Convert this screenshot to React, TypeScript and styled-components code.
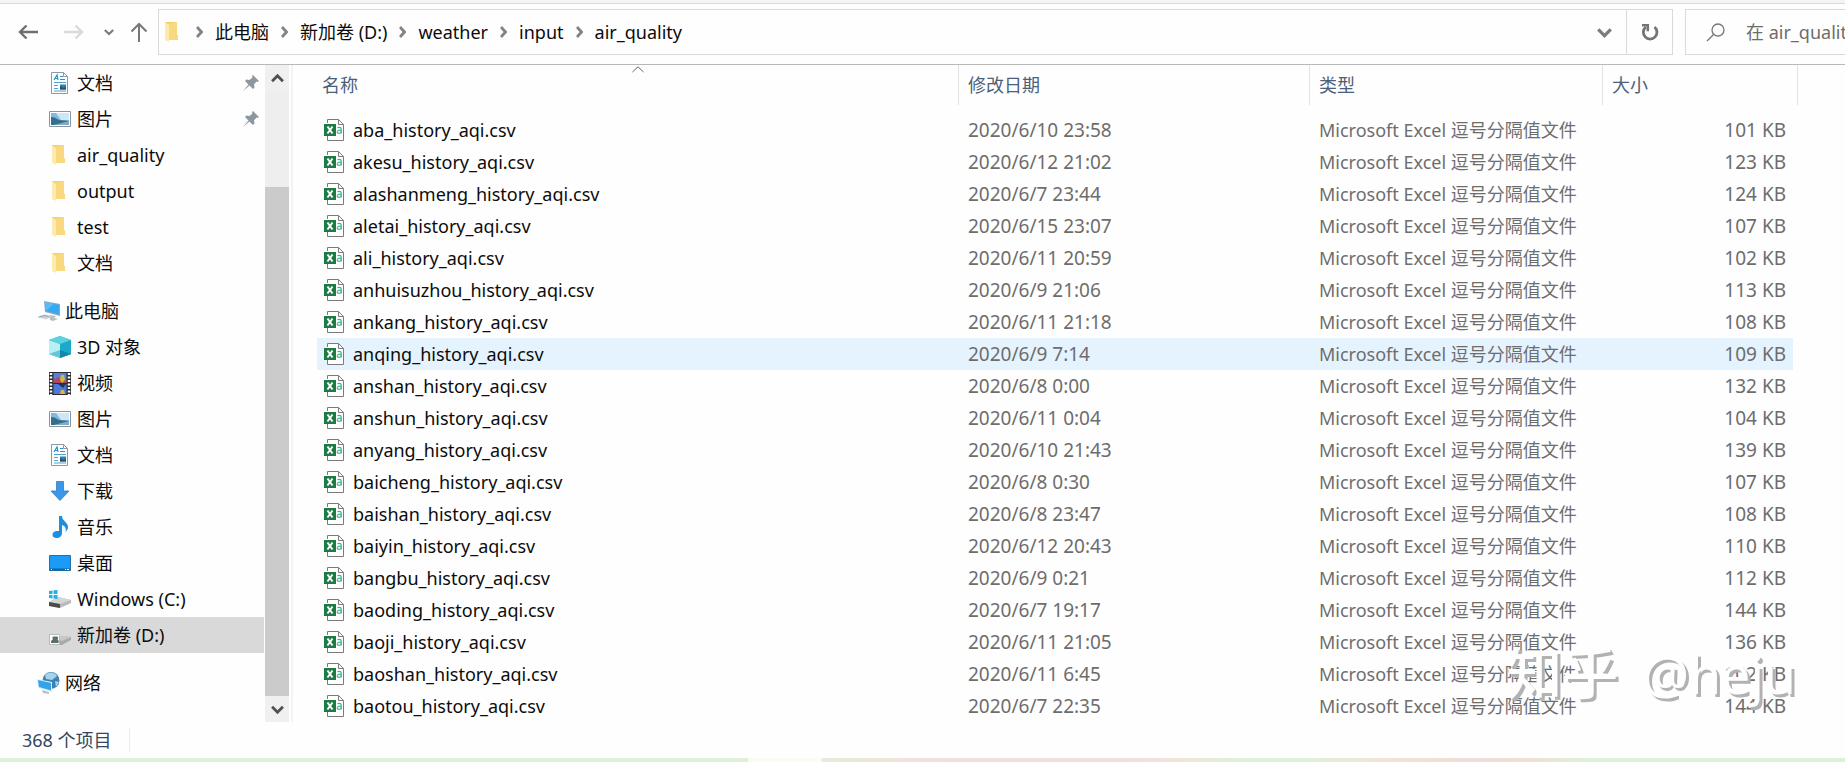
import React from "react";
import styled, { createGlobalStyle, css } from "styled-components";

const GlobalStyle = createGlobalStyle`
  *, *::before, *::after { box-sizing: border-box; }
  body {
    margin: 0;
    background: #fefefe;
    color: #0c0c0c;
    font-family: "Noto Sans", "Noto Sans CJK SC", sans-serif;
    font-size: 18px;
    line-height: 24px;
    overflow-x: hidden;
  }
  button, input { font: inherit; color: inherit; }
`;

/* ---------- layout ---------- */

const Window = styled.div`
  position: relative;
  display: flex;
  flex-direction: column;
  min-width: 1100px;
  overflow: hidden;
`;

const TopEdge = styled.div`
  height: 4px;
  background: #f4f4f4;
  border-bottom: 1px solid #dadada;
`;

const Toolbar = styled.header`
  display: flex;
  align-items: stretch;
  padding: 5px 0 9px 5px;
  border-bottom: 1px solid #b8b8b8;
`;

const IconButton = styled.button<{ $width: number }>`
  flex: none;
  width: ${(p) => p.$width}px;
  padding: 0;
  border: 0;
  background: none;
  display: flex;
  align-items: center;
  justify-content: center;
`;

const AddressBar = styled.nav`
  flex: 1;
  display: flex;
  height: 46px;
  border: 1px solid #d9d9d9;
  padding-left: 3px;
`;

const Crumbs = styled.ol`
  flex: 1;
  display: flex;
  align-items: center;
  gap: 12px;
  margin: 0;
  padding: 0;
  list-style: none;
`;

const Crumb = styled.li`
  display: flex;
  align-items: center;
  gap: 12px;
`;

const CrumbLink = styled.a`
  color: inherit;
  text-decoration: none;
  white-space: nowrap;
`;

const Refresh = styled(IconButton)`
  border-left: 1px solid #d9d9d9;
`;

const SearchBox = styled.label`
  display: flex;
  align-items: center;
  width: 160px;
  margin-left: 12px;
  padding-left: 20px;
  gap: 21px;
  border: 1px solid #d9d9d9;
  border-right: 0;
  color: #6d6d6d;
`;

const SearchInput = styled.input`
  flex: 1;
  min-width: 0;
  padding: 0;
  border: 0;
  outline: 0;
  background: none;
  &::placeholder { color: #6d6d6d; opacity: 1; }
`;

const Body = styled.div`
  display: flex;
`;

const Sidebar = styled.nav`
  flex: none;
  width: 265px;
  padding-right: 1px;
`;

const Group = styled.ul`
  margin: 0 0 12px;
  padding: 0;
  list-style: none;
`;

const PlaceLink = styled.a<{ $root?: boolean; $selected?: boolean }>`
  display: flex;
  align-items: center;
  height: 36px;
  padding: 0 5px 0 ${(p) => (p.$root ? 37 : 49)}px;
  gap: ${(p) => (p.$root ? 5 : 6)}px;
  color: inherit;
  text-decoration: none;
  background: ${(p) => (p.$selected ? "#d9d9d9" : "none")};
`;

const PlaceName = styled.span`
  flex: 1;
  white-space: nowrap;
`;

const ScrollBar = styled.div`
  flex: none;
  display: flex;
  flex-direction: column;
  width: 24px;
  background: #eeeeee;
`;

const ScrollButton = styled.button`
  height: 26px;
  padding: 0;
  border: 0;
  background: #f0f0f0;
  display: flex;
  align-items: center;
  justify-content: center;
`;

const Track = styled.div`
  flex: 1;
  display: flex;
  padding-top: 96px;
`;

const Thumb = styled.div`
  flex: 1;
  background: #cbcbcb;
`;

const Content = styled.main`
  flex: 1;
  min-width: 0;
  margin-left: 2px;
  padding: 0 47px 0 24px;
  border-left: 2px solid #f3f3f3;
`;

/* ---------- file table ---------- */

const FileTable = styled.table`
  width: 100%;
  table-layout: fixed;
  border-collapse: separate;
  border-spacing: 0;
`;

const Col = styled.col<{ $width?: number }>`
  ${(p) => p.$width && css`width: ${p.$width}px;`}
`;

const HeadCell = styled.th`
  height: 49px;
  padding: 0;
  vertical-align: top;
  font-weight: 400;
`;

const HeadButton = styled.button<{ $first?: boolean; $open?: boolean }>`
  position: relative;
  display: block;
  width: 100%;
  height: 40px;
  padding: 0 0 0 ${(p) => (p.$first ? 5 : 9)}px;
  border: 0;
  border-right: ${(p) => (p.$open ? 0 : 1)}px solid #e2e2e2;
  background: none;
  color: #4c607a;
  text-align: left;
`;

const SortMark = styled.svg`
  position: absolute;
  top: 1px;
  left: 50%;
  transform: translateX(-50%);
`;

const HeadEnd = styled.div`
  height: 40px;
  border-right: 1px solid #e2e2e2;
`;

const Row = styled.tr<{ $hover?: boolean }>`
  td:not(:last-child) { background: ${(p) => (p.$hover ? "#e5f3ff" : "none")}; }
`;

const Cell = styled.td`
  height: 32px;
  padding: 0 0 0 9px;
  color: #6d6d6d;
  white-space: nowrap;
`;

const NumberCell = styled(Cell)<{ $right?: boolean }>`
  padding-right: 7px;
  font-size: 19px;
  text-align: ${(p) => (p.$right ? "right" : "left")};
`;

const NameCell = styled(Cell)`
  padding-left: 7px;
  color: #0c0c0c;
`;

const FileName = styled.span`
  display: flex;
  align-items: center;
  gap: 9px;
`;

const StatusBar = styled.footer`
  display: flex;
  align-items: center;
  height: 36px;
  padding-left: 22px;
  color: #33475f;
`;

const StatusText = styled.span`
  padding-right: 17px;
  border-right: 1px solid #ececec;
`;

const BottomEdge = styled.div`
  height: 4px;
  background: linear-gradient(
    90deg,
    #dff0d8 40.5%, #fafbf5 40.6%, #fafbf5 44.5%, #e2ecd8 44.6%, #f0e4d8 48%,
    #f1dfe0 51%, #f1dfe0 61%, #efe5d6 64%, #dff0d8 67%, #dff0d8 71%,
    #f0e4d6 75%, #f1dcd8 80%, #efe0d4 83%, #dff0d8 86%
  );
`;

const Watermark = styled.div`
  position: absolute;
  right: 49px;
  bottom: 52px;
  display: flex;
  align-items: baseline;
  gap: 24px;
  color: #fefefe;
  font-size: 56px;
  font-weight: 500;
  line-height: 72px;
  white-space: nowrap;
  pointer-events: none;
  text-shadow: 3px 3px 0 #b2b2b2;
`;

const WatermarkUser = styled.span`
  font-size: 52px;
  font-weight: 400;
`;

/* ---------- icons ---------- */

const Arrow = ({ color, flip }: { color: string; flip?: boolean }) => (
  <svg width="20" height="16" viewBox="0 0 20 16" fill="none" stroke={color} strokeWidth="2.4">
    {flip ? <path d="M0 8h18M11.5 1.5 18 8l-6.5 6.5" /> : <path d="M20 8H2M8.500 1.500 2 8l6.500 6.500" />}
  </svg>
);

const UpArrow = () => (
  <svg width="18" height="20" viewBox="0 0 18 20" fill="none" stroke="#777" strokeWidth="2">
    <path d="M9 20V2M1.500 9.500 9 2l7.500 7.500" />
  </svg>
);

type ChevronProps = { dir: "down" | "up"; size: number; color?: string };
const chevronPaths = { down: "M1 3.500 6 8.500l5-5", up: "M1 8.500 6 3.500l5 5" };
const Chevron = ({ dir, size, color = "#7c7c7c" }: ChevronProps) => (
  <svg width={size} height={size} viewBox="0 0 12 12" fill="none" stroke={color} strokeWidth="2.6">
    <path d={chevronPaths[dir]} />
  </svg>
);

const CrumbChevron = () => (
  <svg width="7" height="12" viewBox="0 0 7 12" fill="none" stroke="#828282" strokeWidth="2.800">
    <path d="M1 1l4.500 5L1 11" />
  </svg>
);

const RefreshIcon = () => (
  <svg width="18" height="18" viewBox="0 0 18 18" fill="none" stroke="#747474" strokeWidth="2.800">
    <path d="M13.500 4A6.800 6.800 0 1 1 4.800 4" />
    <path d="M1 2.200h5.800v6" strokeWidth="2.500" />
  </svg>
);

const SearchIcon = () => (
  <svg width="19" height="19" viewBox="0 0 19 19" fill="none" stroke="#777" strokeWidth="1.300">
    <circle cx="12" cy="7" r="6" />
    <path d="M7.800 11.200 1 18" />
  </svg>
);

const FolderIcon = () => (
  <svg width="22" height="22" viewBox="0 0 22 22">
    <path d="M3 1h12v18H3z" fill="#f3d06b" />
    <path d="M6.500 2.500 15 1v13h1v5H7z" fill="#f9d97f" />
    <path d="M3 1l4 3v17l-4-2z" fill="#fdeaae" />
  </svg>
);

const DocIcon = () => (
  <svg width="22" height="22" viewBox="0 0 22 22" fill="none">
    <path d="M2.500.5h12l4 4v17h-16z" fill="#fbfdfe" stroke="#8b9aa4" />
    <path d="M14.500.5v4h4" stroke="#8b9aa4" />
    <path d="M5 8l3-5 1 5M6 6.500h3M11 4.500h3M11 7.500h5" stroke="#2f93c6" strokeWidth="1.200" />
    <path d="M5 10.500h12M5 13.500h4M5 16.500h4M5 19h12" stroke="#55a2cc" />
    <path d="M11 12.500h6v5h-6z" fill="#2f7fae" />
    <path d="M11 14l3 2 3-1v2.500h-6z" fill="#2d4f63" />
  </svg>
);

const PictureIcon = () => (
  <svg width="22" height="22" viewBox="0 0 22 22">
    <path d="M.5 3.500h21v15H.5z" fill="#fff" stroke="#8796a2" />
    <path d="M2 5h18v12H2z" fill="#7fb9e6" />
    <path d="M7 5h13v7H12z" fill="#cfe6f5" />
    <path d="M2 9c3 0 5 1 8 3l10 1v4H2z" fill="#35708a" />
    <path d="M5 17l15-4v4z" fill="#86acc4" />
  </svg>
);

const ComputerIcon = () => (
  <svg width="23" height="22" viewBox="0 0 23 22">
    <path d="M7 1l16 3v12L8 12z" fill="#8fa9ba" />
    <path d="M8 2l14 3v9.500L9 11z" fill="#35a8f2" />
    <path d="M8 2l9 2-8 6.500z" fill="#5bbcf8" />
    <path d="M12 15l7 1-2 2 4 1-5 2-3-1z" fill="#b6bfc5" />
    <path d="M0 17l7-2.500 8 2-6 3z" fill="#ccd3d8" />
    <path d="M2 17l6-1.500 4 1" stroke="#92a1ab" fill="none" />
  </svg>
);

const CubeIcon = () => (
  <svg width="22" height="22" viewBox="0 0 22 22">
    <path d="M11 0l11 4v14l-11 4-11-4V4z" fill="#23b4cf" />
    <path d="M0 4l11 4v14L0 18z" fill="#b6f0f5" />
    <path d="M11 8l11-4v14l-11 4z" fill="#1da9c9" />
    <path d="M11 0l11 4-11 4L0 4z" fill="#5dd2de" />
    <path d="M0 18l11-4v8z" fill="#62c8d8" />
    <path d="M11 14l11 4-11 4z" fill="#1588a7" />
  </svg>
);

const VideoIcon = () => (
  <svg width="22" height="23" viewBox="0 0 22 23">
    <path d="M0 0h22v23H0z" fill="#2c2c30" />
    <path d="M2 1v22M20 1v22" stroke="#fff" strokeWidth="2.500" strokeDasharray="2 1.500" />
    <path d="M4.500 1h13v10h-13z" fill="#5c7fd6" />
    <path d="M4.500 12h13v10h-13z" fill="#4c78dc" />
    <path d="M4.500 8l5-3 3 4 5-1v3h-13z" fill="#b3485a" />
    <path d="M12 3h3l1 5-3 3-2-3z" fill="#d8b92c" />
    <path d="M12 18h3l1 4h-5z" fill="#e3b62a" />
    <path d="M9 12h8l-3 4z" fill="#24324f" />
  </svg>
);

const DownloadIcon = () => (
  <svg width="22" height="22" viewBox="0 0 22 22">
    <path d="M7.500 1.500h7V11H20l-9 9.500L2 11h5.500z" fill="#3b97e8" stroke="#2b7fc9" strokeWidth=".8" />
  </svg>
);

const MusicIcon = () => (
  <svg width="22" height="22" viewBox="0 0 22 22" fill="#1d8fe0">
    <path d="M10 0h3c0 5 6 6 6 11 0 2-1 3.500-2.500 5 1-4-.5-6-3.500-7v8c0 3-2.500 5-5.500 5S3.500 20.500 3.500 18.500 6 15 8 15h2z" />
  </svg>
);

const DesktopIcon = () => (
  <svg width="22" height="22" viewBox="0 0 22 22">
    <path d="M.5 3.500h21v15H.5z" fill="#1c9af7" stroke="#2b6f9f" />
    <path d="M1 16.500h20v2H1z" fill="#0d66ad" />
    <path d="M2 17.500h1M16 17.500h1M18 17.500h2" stroke="#fff" />
  </svg>
);

const WinDriveIcon = () => (
  <svg width="22" height="22" viewBox="0 0 22 22">
    <path d="M0 14l9-5 13 3v3l-11 5-11-2z" fill="#b9b9b9" />
    <path d="M0 14l9-5 13 3-11 4z" fill="#d5d5d5" />
    <path d="M0 14l11 2v4L0 18z" fill="#4b4b4b" />
    <path d="M0 3l3.500-.5V6H0zM4.500 2.300 8.500 2v4h-4zM0 7h3.500v3.500L0 10zM4.500 7h4v4l-4-.4z" fill="#21b3e4" />
  </svg>
);

const SharedDriveIcon = () => (
  <svg width="22" height="22" viewBox="0 0 22 22">
    <path d="M8 15l6-3 8 1v3l-9 5H8z" fill="#aaaaaa" />
    <path d="M8 15l6-3 8 1-9 4z" fill="#c8c8c8" />
    <path d="M.5 10.500h10v10H.5z" fill="#fff" stroke="#b5bbb8" />
    <path d="M2 19c0-3 1-3 2-3.500-1-1-1-3 1-3h3.500c1 1 .5 2.500 0 3 1 .5 1.500 1 1 3.500z" fill="#5d6e6a" />
  </svg>
);

const NetworkIcon = () => (
  <svg width="23" height="22" viewBox="0 0 23 22">
    <circle cx="14" cy="8.500" r="8.500" fill="#3d83b1" />
    <path d="M8 3c4-4 10-3 12 1l-5 4-6-1zM18 9l4 1-3 5z" fill="#a4d4ea" />
    <path d="M0 7l15 3v10L1 16z" fill="#dcecf5" />
    <path d="M1 8l13 3v7.500L2 15z" fill="#35a2ec" />
    <path d="M5 18l7 2v2l-6-1z" fill="#b5c1c9" />
  </svg>
);

const PinIcon = () => (
  <svg width="16" height="16" viewBox="0 0 16 16" fill="#8d979f">
    <path d="M10 0l6 6-1.500 1-1-.5L11 9.500l.5 3L10 14l-3.500-3.500L0 16l5.500-6.500L2 6l1.500-1.500 3 .5L9.500 2.500 9 1z" />
  </svg>
);

const CsvIcon = () => (
  <svg width="20" height="22" viewBox="0 0 20 22" fill="none">
    <path d="M3.500 4V.5h11l5 5v16h-16V17" fill="#fff" stroke="#7a7a7a" />
    <path d="M14.500.5v5h5" stroke="#7a7a7a" />
    <path d="M0 5h12v12H0z" fill="#1c7a45" />
    <path d="M3.500 7.500l5 7M8.500 7.500l-5 7" stroke="#fff" strokeWidth="2" />
    <path d="M13.500 9c1-1 3.700-1 3.700 1v4.500M17 11.200c-2-.2-4 .3-3.800 2 .3 1.700 3 1.300 3.800-.2" stroke="#41b883" strokeWidth="1.300" />
  </svg>
);

/* ---------- data ---------- */

type Place = { name: string; icon: React.ReactNode; pinned?: boolean; root?: boolean; selected?: boolean };

const groups: Place[][] = [
  [
    { name: "文档", icon: <DocIcon />, pinned: true },
    { name: "图片", icon: <PictureIcon />, pinned: true },
    { name: "air_quality", icon: <FolderIcon /> },
    { name: "output", icon: <FolderIcon /> },
    { name: "test", icon: <FolderIcon /> },
    { name: "文档", icon: <FolderIcon /> },
  ],
  [
    { name: "此电脑", icon: <ComputerIcon />, root: true },
    { name: "3D 对象", icon: <CubeIcon /> },
    { name: "视频", icon: <VideoIcon /> },
    { name: "图片", icon: <PictureIcon /> },
    { name: "文档", icon: <DocIcon /> },
    { name: "下载", icon: <DownloadIcon /> },
    { name: "音乐", icon: <MusicIcon /> },
    { name: "桌面", icon: <DesktopIcon /> },
    { name: "Windows (C:)", icon: <WinDriveIcon /> },
    { name: "新加卷 (D:)", icon: <SharedDriveIcon />, selected: true },
  ],
  [{ name: "网络", icon: <NetworkIcon />, root: true }],
];

const crumbs = ["此电脑", "新加卷 (D:)", "weather", "input", "air_quality"];

const files: [string, string, number][] = [
  ["aba", "2020/6/10 23:58", 101],
  ["akesu", "2020/6/12 21:02", 123],
  ["alashanmeng", "2020/6/7 23:44", 124],
  ["aletai", "2020/6/15 23:07", 107],
  ["ali", "2020/6/11 20:59", 102],
  ["anhuisuzhou", "2020/6/9 21:06", 113],
  ["ankang", "2020/6/11 21:18", 108],
  ["anqing", "2020/6/9 7:14", 109],
  ["anshan", "2020/6/8 0:00", 132],
  ["anshun", "2020/6/11 0:04", 104],
  ["anyang", "2020/6/10 21:43", 139],
  ["baicheng", "2020/6/8 0:30", 107],
  ["baishan", "2020/6/8 23:47", 108],
  ["baiyin", "2020/6/12 20:43", 110],
  ["bangbu", "2020/6/9 0:21", 112],
  ["baoding", "2020/6/7 19:17", 144],
  ["baoji", "2020/6/11 21:05", 136],
  ["baoshan", "2020/6/11 6:45", 102],
  ["baotou", "2020/6/7 22:35", 144],
];

export default function App() {
  return (
    <>
      <GlobalStyle />
      <Window>
        <TopEdge />
        <Toolbar>
          <IconButton $width={46} aria-label="后退"><Arrow color="#6f6f6f" /></IconButton>
          <IconButton $width={46} aria-label="前进"><Arrow color="#dadada" flip /></IconButton>
          <IconButton $width={23} aria-label="最近浏览的位置"><Chevron dir="down" size={10} /></IconButton>
          <IconButton $width={38} aria-label="上移"><UpArrow /></IconButton>
          <AddressBar aria-label="地址">
            <Crumbs>
              <Crumb><FolderIcon /></Crumb>
              {crumbs.map((name) => (
                <Crumb key={name}>
                  <CrumbChevron />
                  <CrumbLink href="#">{name}</CrumbLink>
                </Crumb>
              ))}
            </Crumbs>
            <IconButton $width={44} aria-label="以前的位置"><Chevron dir="down" size={15} /></IconButton>
            <Refresh $width={46} aria-label="刷新"><RefreshIcon /></Refresh>
          </AddressBar>
          <SearchBox>
            <SearchIcon />
            <SearchInput type="text" aria-label="搜索" placeholder="在 air_quality 中搜索" />
          </SearchBox>
        </Toolbar>

        <Body>
          <Sidebar aria-label="导航窗格">
            {groups.map((places, g) => (
              <Group key={g}>
                {places.map((p, i) => (
                  <li key={i}>
                    <PlaceLink href="#" $root={p.root} $selected={p.selected}>
                      {p.icon}
                      <PlaceName>{p.name}</PlaceName>
                      {p.pinned && <PinIcon />}
                    </PlaceLink>
                  </li>
                ))}
              </Group>
            ))}
          </Sidebar>
          <ScrollBar>
            <ScrollButton aria-label="向上滚动"><Chevron dir="up" size={13} color="#505050" /></ScrollButton>
            <Track><Thumb /></Track>
            <ScrollButton aria-label="向下滚动"><Chevron dir="down" size={13} color="#505050" /></ScrollButton>
          </ScrollBar>
          <Content>
            <FileTable>
              <colgroup>
                <Col />
                <Col $width={351} />
                <Col $width={293} />
                <Col $width={190} />
                <Col $width={5} />
              </colgroup>
              <thead>
                <tr>
                  <HeadCell scope="col">
                    <HeadButton $first>
                      名称
                      <SortMark width="12" height="7" viewBox="0 0 12 7" fill="none" stroke="#666">
                        <path d="M.5 6 6 .8 11.500 6" />
                      </SortMark>
                    </HeadButton>
                  </HeadCell>
                  <HeadCell scope="col"><HeadButton>修改日期</HeadButton></HeadCell>
                  <HeadCell scope="col"><HeadButton>类型</HeadButton></HeadCell>
                  <HeadCell scope="col"><HeadButton $open>大小</HeadButton></HeadCell>
                  <HeadCell as="td"><HeadEnd /></HeadCell>
                </tr>
              </thead>
              <tbody>
                {files.map(([city, date, size]) => (
                  <Row key={city} $hover={city === "anqing"}>
                    <NameCell>
                      <FileName><CsvIcon />{city}_history_aqi.csv</FileName>
                    </NameCell>
                    <NumberCell>{date}</NumberCell>
                    <Cell>Microsoft Excel 逗号分隔值文件</Cell>
                    <NumberCell $right>{size} KB</NumberCell>
                    <td />
                  </Row>
                ))}
              </tbody>
            </FileTable>
          </Content>
        </Body>

        <StatusBar><StatusText>368 个项目</StatusText></StatusBar>
        <BottomEdge />
        <Watermark>知乎<WatermarkUser>@heju</WatermarkUser></Watermark>
      </Window>
    </>
  );
}
